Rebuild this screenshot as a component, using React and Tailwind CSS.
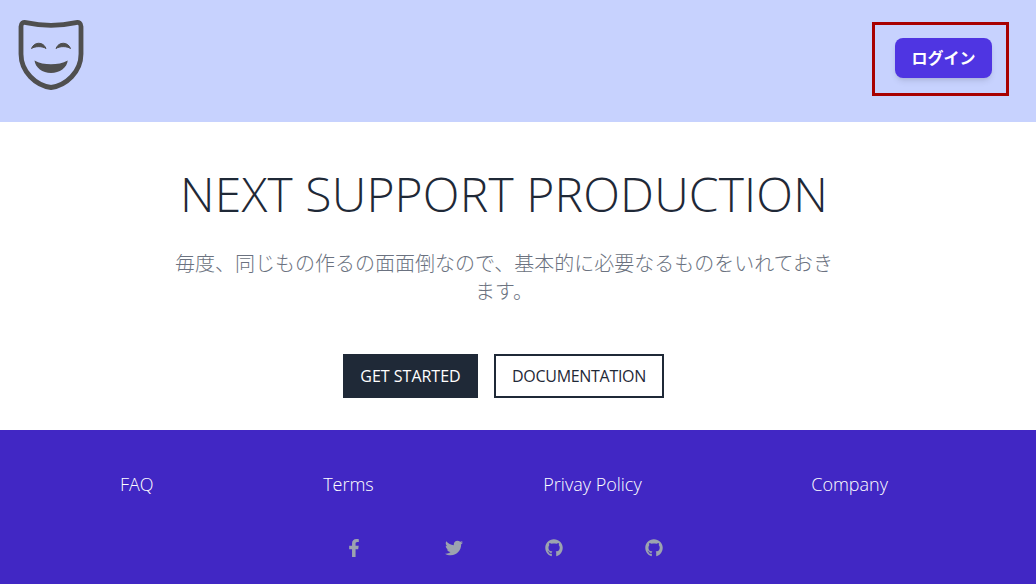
import React from "react";
import { FaFacebookF, FaTwitter, FaGithub } from "react-icons/fa";

function Logo() {
  return (
    <svg width="70" height="76" viewBox="0 0 70 76" fill="none" className="block">
      <path d="M5 9.5C5 6.5 7 5 10 5.6C18 7.3 26.5 8.3 35 8.3C43.5 8.3 52 7.3 60 5.6C63 5 65 6.5 65 9.5V37C65 55 50 68.5 35 70.5C20 68.5 5 55 5 37Z" stroke="#4f4f4f" strokeWidth="4.8" strokeLinejoin="round" />
      <path d="M15.5 31.5C18 24.5 27.5 24.5 30 31.5C26.5 29 19 29 15.5 31.5Z" fill="#4f4f4f" stroke="#4f4f4f" strokeWidth="1" strokeLinejoin="round" />
      <path d="M40 31.5C42.5 24.5 52 24.5 54.5 31.5C51 29 43.5 29 40 31.5Z" fill="#4f4f4f" stroke="#4f4f4f" strokeWidth="1" strokeLinejoin="round" />
      <path d="M18.5 43.5C23 46.5 29 47.2 35 47.2C41 47.2 47 46.5 51.7 43.5C51.2 50.5 43.5 56 35 56C26.5 56 19.3 50.5 18.5 43.5Z" fill="#4f4f4f" />
    </svg>
  );
}

export default function App() {
  const ui = { fontFamily: '"Open Sans","Noto Sans CJK JP",sans-serif' };
  return (
    <div className="w-full" style={ui}>
      <header className="h-[122px] bg-[#c7d2fe] flex justify-between pl-[16px] pr-[27px]">
        <div className="pt-[17px]"><Logo /></div>
        <div className="mt-[22px] h-[74px] w-[137px] border-[3px] border-[#a80000] pl-[20px] pt-[13px]">
          <button className="block w-[97px] h-[40px] pb-[2px] rounded-lg bg-[#4f35e2] text-white font-bold text-base shadow-md" style={{ fontFamily: '"Noto Sans CJK JP",sans-serif' }}>ログイン</button>
        </div>
      </header>
      <main className="h-[308px] bg-white flex flex-col items-center pt-[40px] pr-[28px]">
        <h1 className="text-[48px] leading-[64px] font-light text-[#1f2937] tracking-[0.16px] whitespace-nowrap">NEXT SUPPORT PRODUCTION</h1>
        <p className="mt-[23px] w-[672px] text-center text-xl leading-[28px] font-light text-[#6b7280]" style={{ fontFamily: '"Noto Sans CJK JP",sans-serif' }}>毎度、同じもの作るの面面倒なので、基本的に必要なるものをいれておきます。</p>
        <div className="mt-[49px] flex gap-4 pr-[1px]">
          <a className="h-[44px] w-[135px] bg-[#1f2937] text-white text-base flex items-center justify-center">GET STARTED</a>
          <a className="h-[44px] w-[170px] border-2 border-[#1f2937] text-[#1f2937] text-base tracking-[-0.3px] flex items-center justify-center">DOCUMENTATION</a>
        </div>
      </main>
      <footer className="h-[154px] bg-[#4127c4] text-white text-lg font-light">
        <div className="flex justify-between pl-[120px] pr-[148px] pt-[40px] leading-[28px]">
          <a>FAQ</a><a>Terms</a><a>Privay Policy</a><a>Company</a>
        </div>
        <div className="flex justify-center pr-[28px] pt-[41px] text-[#9ca3af]">
          <div className="w-[100px] flex justify-center"><FaFacebookF size={18} /></div>
          <div className="w-[100px] flex justify-center"><FaTwitter size={18} /></div>
          <div className="w-[100px] flex justify-center"><FaGithub size={18} /></div>
          <div className="w-[100px] flex justify-center"><FaGithub size={18} /></div>
        </div>
      </footer>
    </div>
  );
}
